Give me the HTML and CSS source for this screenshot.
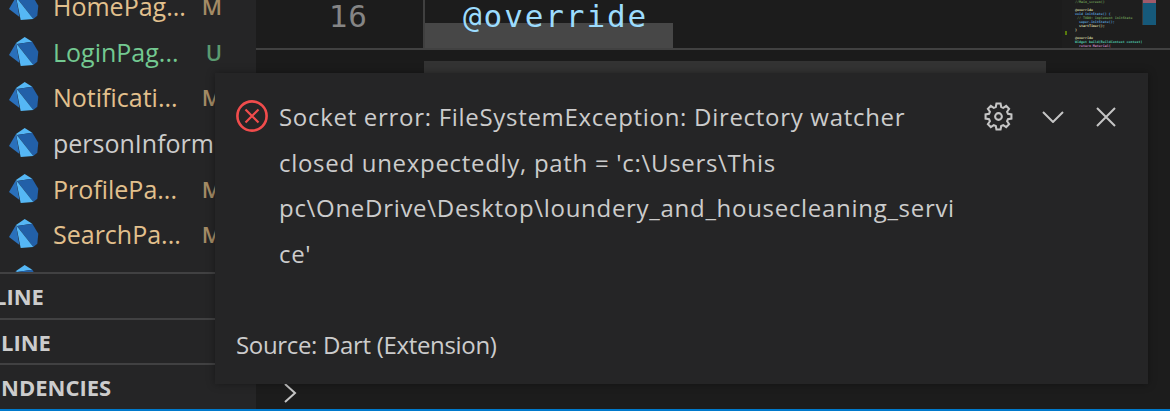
FILE: index.html
```html
<!DOCTYPE html>
<html lang="en">
<head>
	<meta charset="UTF-8">
	<title>Socket error</title>
	<link rel="stylesheet" href="styles.css">
</head>
<body>
	<svg class="defs" width="0" height="0">
		<symbol id="dart" viewBox="0 0 30 30">
			<path d="M7 6 L15.7 0 L23.3 4.7 L8 7 Z" fill="#55b7f5"/>
			<path d="M8 7 L23.3 4.7 L29.3 14.7 L28.3 24.7 L24.3 28 Z" fill="#2260a8"/>
			<path d="M7 6 L24.3 28 L11.7 29 Z" fill="#55b7f5"/>
			<path d="M0 18 L7 6 L10.5 26 Z" fill="#2a70bb"/>
		</symbol>
	</svg>
	<div class="window">
		<aside class="sidebar">
			<ul class="files">
				<li class="file file--mod"><svg class="file__icon"><use href="#dart"/></svg><span class="file__name">HomePag...</span><b class="file__badge">M</b></li>
				<li class="file file--new"><svg class="file__icon"><use href="#dart"/></svg><span class="file__name">LoginPag...</span><b class="file__badge">U</b></li>
				<li class="file file--mod"><svg class="file__icon"><use href="#dart"/></svg><span class="file__name">Notificati...</span><b class="file__badge">M</b></li>
				<li class="file"><svg class="file__icon"><use href="#dart"/></svg><span class="file__name">personInform</span></li>
				<li class="file file--mod"><svg class="file__icon"><use href="#dart"/></svg><span class="file__name">ProfilePa...</span><b class="file__badge">M</b></li>
				<li class="file file--mod"><svg class="file__icon"><use href="#dart"/></svg><span class="file__name">SearchPa...</span><b class="file__badge">M</b></li>
				<li class="file file--mod"><svg class="file__icon"><use href="#dart"/></svg><span class="file__name">TimeLinePa</span></li>
			</ul>
			<div class="section section--one">LINE</div>
			<div class="section">LINE</div>
			<div class="section">NDENCIES</div>
		</aside>
		<main class="main">
			<div class="editor">
				<div class="editor__gutter">16</div>
				<div class="editor__code">
					<div class="editor__tab"></div>
					<span class="editor__line">@override</span>
				</div>
				<div class="minimap">
					<div class="minimap__mark"></div>
					<div class="minimap__code">
						<p class="mm-g">//Main_screen()</p>
						<p>&nbsp;</p>
						<p class="mm-y">@override</p>
						<p class="mm-b">void initState() {</p>
						<p class="mm-g">&nbsp;// TODO: implement initState</p>
						<p class="mm-b">&nbsp;&nbsp;super.initState();</p>
						<p class="mm-y">&nbsp;&nbsp;startTimer();</p>
						<p class="mm-y">}</p>
						<p>&nbsp;</p>
						<p class="mm-y">@override</p>
						<p class="mm-t">Widget build(BuildContext context) {</p>
						<p class="mm-p">&nbsp;&nbsp;return Material(</p>
					</div>
					<div class="minimap__bar"></div>
				</div>
			</div>
			<div class="peek">
				<div class="peek__strip"></div>
			</div>
			<div class="terminal">
				<svg class="terminal__chevron" width="14" height="20" viewBox="0 0 14 20"><path d="M2 1 L12 10 L2 19" fill="none" stroke="#c5c5c5" stroke-width="2"/></svg>
			</div>
		</main>
	</div>
	<div class="statusbar"></div>

	<div class="toast">
		<svg class="toast__error" width="32" height="32" viewBox="0 0 32 32">
			<circle cx="16" cy="16" r="14.6" fill="none" stroke="#f14c4c" stroke-width="2.6"/>
			<path d="M9.5 9.5 L22.5 22.5 M22.5 9.5 L9.5 22.5" stroke="#f14c4c" stroke-width="2.2"/>
		</svg>
		<p class="toast__msg">Socket error: FileSystemException: Directory watcher closed unexpectedly, path = 'c:\Users\This pc\OneDrive\Desktop\loundery_and_housecleaning_servi<br>ce'</p>
		<div class="toast__actions">
			<svg width="29" height="29" viewBox="-15.5 -15.5 31 31" fill="none" stroke="#c5c5c5" stroke-width="2.2">
				<path d="M-2.9 -10.09 L-2.19 -13.83 L2.19 -13.83 L2.9 -10.09 L5.08 -9.19 L8.23 -11.33 L11.33 -8.23 L9.19 -5.08 L10.09 -2.9 L13.83 -2.19 L13.83 2.19 L10.09 2.9 L9.19 5.08 L11.33 8.23 L8.23 11.33 L5.08 9.19 L2.9 10.09 L2.19 13.83 L-2.19 13.83 L-2.9 10.09 L-5.08 9.19 L-8.23 11.33 L-11.33 8.23 L-9.19 5.08 L-10.09 2.9 L-13.83 2.19 L-13.83 -2.19 L-10.09 -2.9 L-9.19 -5.08 L-11.33 -8.23 L-8.23 -11.33 L-5.08 -9.19 Z"/>
				<circle r="3.6"/>
			</svg>
			<svg width="22" height="12" viewBox="0 0 22 12" fill="none" stroke="#c5c5c5" stroke-width="2"><path d="M1 1 L11 11 L21 1"/></svg>
			<svg class="toast__close" width="20" height="20" viewBox="0 0 20 20" fill="none" stroke="#c5c5c5" stroke-width="2"><path d="M1 1 L19 19 M19 1 L1 19"/></svg>
		</div>
		<div class="toast__source">Source: Dart (Extension)</div>
	</div>
</body>
</html>
```

FILE: styles.css
```css
* {
	box-sizing: border-box;
}
html, body {
	margin: 0;
	height: 411px;
	overflow: hidden;
	background: #1e1e1e;
}
body {
	position: relative;
	font-family: "Open Sans", "Noto Sans", sans-serif;
	color: #ccc;
}
p {
	margin: 0;
}
.defs {
	position: absolute;
}
.window {
	display: flex;
	height: 409px;
}
.sidebar {
	width: 256px;
	flex: none;
	background: #252526;
	overflow: hidden;
}
.files {
	list-style: none;
	margin: -17px 0 0;
	padding: 0;
	height: 289px;
	overflow: hidden;
}
.file {
	display: flex;
	align-items: center;
	height: 45.7px;
	padding-left: 9px;
	font-size: 25px;
	white-space: nowrap;
}
.file__icon {
	width: 30px;
	height: 30px;
	flex: none;
	margin-right: 14px;
}
.file__name {
	flex: none;
	width: 148px;
}
.file__badge {
	width: 21px;
	font-size: 22px;
	font-weight: 600;
	text-align: right;
}
.file--mod .file__name {
	color: #e2c08d;
}
.file--mod .file__badge {
	color: #a38b65;
}
.file--new .file__name {
	color: #73c991;
}
.file--new .file__badge {
	color: #5a9a70;
}
.section {
	height: 45.5px;
	border-top: 2px solid #414142;
	padding-left: 1px;
	font-size: 22px;
	font-weight: 700;
	line-height: 44px;
}
.section--one {
	margin-left: -7px;
}
.main {
	flex: 1;
	display: flex;
	flex-direction: column;
	background: #1c1c1c;
}
.editor {
	display: flex;
	height: 50px;
	border-bottom: 2px solid #414141;
}
.editor__gutter {
	width: 167px;
	flex: none;
	padding-right: 55px;
	text-align: right;
	font: 31px/32px "DejaVu Sans Mono", monospace;
	letter-spacing: 1px;
	color: #858585;
}
.editor__code {
	position: relative;
	flex: 1;
	border-left: 2px solid #404040;
	padding-left: 38px;
	font: 31px/32px "DejaVu Sans Mono", monospace;
	letter-spacing: 1.9px;
	color: #9cdcfe;
}
.editor__tab {
	position: absolute;
	left: 0;
	top: 23px;
	width: 248px;
	height: 25px;
	background: #474747;
}
.editor__line {
	position: relative;
}
.minimap {
	display: flex;
	width: 108px;
	flex: none;
	overflow: hidden;
	background: #1e1e1e;
	position: relative;
}
.minimap__mark {
	position: absolute;
	left: 3px;
	top: 31px;
	width: 2px;
	height: 4px;
	background: #587c0c;
}
.minimap__code {
	width: 80px;
	flex: none;
	padding-left: 13px;
	font: 700 3.3px/4px "DejaVu Sans Mono", monospace;
	white-space: nowrap;
	overflow: hidden;
}
.mm-g { color: #6a9955; }
.mm-y { color: #dcdcaa; }
.mm-b { color: #569cd6; }
.mm-t { color: #4ec9b0; }
.mm-p { color: #c586c0; }
.minimap__bar {
	width: 14px;
	height: 25px;
	flex: none;
	background: linear-gradient(#a05a6a 0, #a05a6a 3px, #16597a 3px);
	border-left: 1px solid #3a3a3a;
}
.peek {
	height: 60px;
	padding-top: 11px;
	padding-left: 168px;
	background: #1b1b1b;
}
.peek__strip {
	width: 622px;
	height: 12px;
	background: #333;
}
.terminal {
	flex: 1;
	display: flex;
	align-items: flex-end;
	padding: 0 0 6px 27px;
}
.terminal__chevron {
	display: block;
}
.statusbar {
	height: 2px;
	background: #007acc;
}
.toast {
	position: absolute;
	left: 215px;
	top: 73px;
	width: 933px;
	height: 311px;
	background: #252526;
	box-shadow: 0 0 8px rgba(0, 0, 0, 0.36);
	font-size: 24px;
}
.toast__error {
	position: absolute;
	left: 21px;
	top: 27px;
}
.toast__msg {
	position: absolute;
	left: 64px;
	top: 21px;
	width: 690px;
	line-height: 45.5px;
	letter-spacing: 0.7px;
}
.toast__actions {
	position: absolute;
	left: 769px;
	top: 29px;
	display: flex;
	align-items: center;
	gap: 29px;
}
.toast__actions svg {
	display: block;
}
.toast__actions .toast__close {
	margin-left: 3px;
}
.toast__source {
	position: absolute;
	left: 21px;
	top: 254px;
	line-height: 36px;
	letter-spacing: -0.33px;
}
```
